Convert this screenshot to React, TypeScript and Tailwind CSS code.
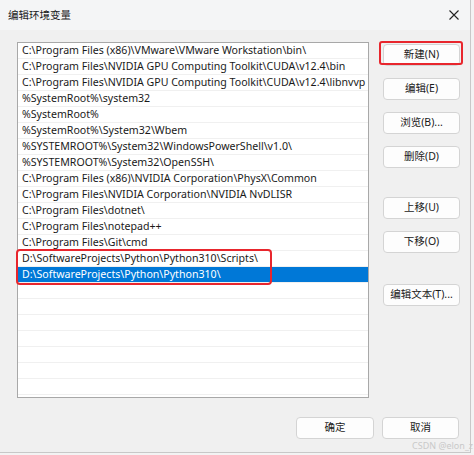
import React from "react";

const rows = [
  "C:\\Program Files (x86)\\VMware\\VMware Workstation\\bin\\",
  "C:\\Program Files\\NVIDIA GPU Computing Toolkit\\CUDA\\v12.4\\bin",
  "C:\\Program Files\\NVIDIA GPU Computing Toolkit\\CUDA\\v12.4\\libnvvp",
  "%SystemRoot%\\system32",
  "%SystemRoot%",
  "%SystemRoot%\\System32\\Wbem",
  "%SYSTEMROOT%\\System32\\WindowsPowerShell\\v1.0\\",
  "%SYSTEMROOT%\\System32\\OpenSSH\\",
  "C:\\Program Files (x86)\\NVIDIA Corporation\\PhysX\\Common",
  "C:\\Program Files\\NVIDIA Corporation\\NVIDIA NvDLISR",
  "C:\\Program Files\\dotnet\\",
  "C:\\Program Files\\notepad++",
  "C:\\Program Files\\Git\\cmd",
  "D:\\SoftwareProjects\\Python\\Python310\\Scripts\\",
  "D:\\SoftwareProjects\\Python\\Python310\\",
  "",
  "",
  "",
  "",
  "",
  "",
  "",
];

const font = { fontFamily: '"Noto Sans", "Noto Sans CJK SC", sans-serif' };

function Btn({ label, className = "" }: { label: string; className?: string }) {
  return (
    <div
      className={
        "h-[22px] w-[77px] flex items-center justify-center rounded-[4px] border border-[#d4d4d4] bg-[#fdfdfd] text-[10.5px] text-[#1a1a1a] whitespace-nowrap " +
        className
      }
    >
      {label}
    </div>
  );
}

export default function App() {
  return (
    <div className="relative w-[474px] h-[455px] bg-[#f3f3f3] overflow-hidden" style={font}>
      <div className="w-[471px] h-[453px] bg-[#f0f0f0] border-r border-b border-[#c8c8c8] flex flex-col">
        {/* title bar */}
        <div className="h-[30px] flex items-center justify-between pl-[8px] pr-[10px] bg-[#f4f5f6]">
          <span className="text-[10.5px] text-[#1a1a1a] leading-none">编辑环境变量</span>
          <svg width="10" height="10" viewBox="0 0 10 10" className="mr-[1px]">
            <path d="M0.5 0.5 L9.5 9.5 M9.5 0.5 L0.5 9.5" stroke="#222" strokeWidth="1.1" />
          </svg>
        </div>
        {/* body */}
        <div className="flex pl-[17px] pt-[12px]">
          <div className="w-[352px] h-[356px] border border-[#a8a8a8] bg-white overflow-hidden">
            {rows.map((r, i) => (
              <div
                key={i}
                className={
                  "h-[16px] border-b border-[#f0f0f0] flex items-center pl-[4px] text-[10.6px] whitespace-nowrap leading-none " +
                  (i === 14 ? "bg-[#0078d7] text-white" : "text-[#1a1a1a]")
                }
              >
                <span>{r}</span>
              </div>
            ))}
          </div>
          <div className="ml-[14px] pt-[2px] flex flex-col">
            <Btn label="新建(N)" />
            <Btn label="编辑(E)" className="mt-[12px]" />
            <Btn label="浏览(B)..." className="mt-[12px]" />
            <Btn label="删除(D)" className="mt-[12px]" />
            <Btn label="上移(U)" className="mt-[29px]" />
            <Btn label="下移(O)" className="mt-[12px]" />
            <Btn label="编辑文本(T)..." className="mt-[31px]" />
          </div>
        </div>
        <div className="flex justify-end gap-[8px] pr-[11px] mt-[19px]">
          <Btn label="确定" className="w-[78px] border-[#7eb4ea] bg-[#f8fbff]" />
          <Btn label="取消" />
        </div>
      </div>
      {/* red highlights */}
      <div className="absolute left-[379px] top-[41px] w-[84px] h-[24px] border-2 border-[#e8262d] rounded-[3px]" />
      <div className="absolute left-[16px] top-[249px] w-[256px] h-[36px] border-[2.5px] border-[#e8262d] rounded-[4px]" />
      <div className="absolute left-[412px] top-[441px] text-[9px] text-[#c9c9c9] leading-none">CSDN @elon_z</div>
    </div>
  );
}
